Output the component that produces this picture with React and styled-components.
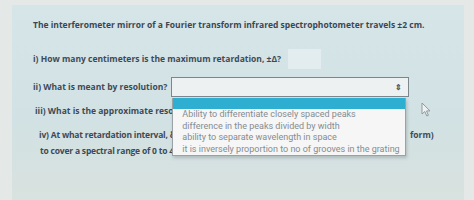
import React from 'react';
import styled, {createGlobalStyle} from 'styled-components';

const Global = createGlobalStyle`
  html, body {
    margin: 0;
    padding: 0;
    background: #e4e8e6;
  }
  body {
    font-family: "Open Sans", "Liberation Sans", sans-serif;
  }
`;

const Page = styled.div`
  width: 474px;
  height: 200px;
  box-sizing: border-box;
  padding: 5px 10px 0 12px;
  overflow: hidden;
  position: relative;
`;

const Panel = styled.div`
  height: 195px;
  box-sizing: border-box;
  background: linear-gradient(180deg, #d6e5e8 0%, #d2e1e3 60%, #d8e2df 100%);
  padding: 14px 30px 0 21px;
`;

const Title = styled.div`
  height: 12px;
  line-height: 12px;
  font-size: 8.5px;
  font-weight: 700;
  color: #3a4753;
  white-space: nowrap;
  margin-bottom: 18px;
`;

const Row = styled.div`
  display: flex;
  align-items: center;
  height: ${p => p.h || 20}px;
  line-height: 12px;
  margin-top: ${p => p.gap || 0}px;
  padding-left: ${p => p.indent || 0}px;
  font-size: 8.5px;
  font-weight: 700;
  letter-spacing: ${p => p.spacing || 0}px;
  color: #3d4a56;
  white-space: nowrap;
  position: relative;
`;

const Clip = styled.span`
  flex: 0 0 ${p => p.w}px;
  overflow: hidden;
`;

const Tail = styled.span`
  letter-spacing: 0;
`;

const Answer = styled.div`
  width: 33px;
  height: 20px;
  margin-left: 7px;
  background: #e3ecee;
`;

const SelectWrap = styled.div`
  position: relative;
  margin-left: 4px;
`;

const SelectBox = styled.div`
  width: 238px;
  height: 20px;
  box-sizing: border-box;
  border: 1px solid #7d868c;
  background: #eef1f1;
  display: flex;
  align-items: center;
  justify-content: flex-end;
  padding-right: 6px;
  color: #4c565e;
  font-size: 8px;
`;

const Menu = styled.div`
  position: absolute;
  top: 21px;
  left: 1px;
  width: 234px;
  box-sizing: border-box;
  border: 1px solid #9aa2a6;
  border-top: none;
  background: #f5f6f5;
  box-shadow: 1px 2px 3px rgba(60, 70, 75, 0.25);
  z-index: 2;
`;

const Highlight = styled.div`
  height: 11px;
  background: #2eafd2;
`;

const Option = styled.div`
  height: 11.5px;
  line-height: 11.5px;
  padding-left: 9px;
  font-family: Roboto, "Open Sans", sans-serif;
  font-size: 9px;
  font-weight: 400;
  letter-spacing: 0;
  color: #858c92;
  white-space: nowrap;
`;

const Cursor = styled.svg`
  position: absolute;
  left: 421px;
  top: 102px;
`;

const options = [
  'Ability to differentiate closely spaced peaks',
  'difference in the peaks divided by width',
  'ability to separate wavelength in space',
  'it is inversely proportion to no of grooves in the grating',
];

export default function App() {
  return (
    <>
      <Global />
      <Page>
        <Panel>
          <Title>
            The interferometer mirror of a Fourier transform infrared spectrophotometer travels ±2 cm.
          </Title>
          <Row indent={-2}>
            i) How many centimeters is the maximum retardation, ±Δ?
            <Answer />
          </Row>
          <Row gap={8} indent={-2}>
            ii) What is meant by resolution?
            <SelectWrap>
              <SelectBox>⇕</SelectBox>
              <Menu>
                <Highlight />
                {options.map(o => (
                  <Option key={o}>{o}</Option>
                ))}
              </Menu>
            </SelectWrap>
          </Row>
          <Row h={16} gap={6} indent={2}>
            iii) What is the approximate resolution of this instrument?
          </Row>
          <Row h={16} gap={8} indent={6} spacing={-0.2}>
            <Clip w={371}>
              iv) At what retardation interval, δ, must the interferogram be digitized (Fourier trans
            </Clip>
            <Tail>form)</Tail>
          </Row>
          <Row h={14} gap={1} indent={7} spacing={-0.2}>
            to cover a spectral range of 0 to 4000 cm⁻¹?
          </Row>
        </Panel>
        <Cursor width="10" height="15" viewBox="0 0 10 15">
          <path d="M1 1 L1 12 L3.8 9.5 L5.8 14 L7.4 13.3 L5.5 8.9 L9 8.9 Z" fill="#eef2f2" stroke="#8a9296" strokeWidth="0.9" strokeLinejoin="round" />
        </Cursor>
      </Page>
    </>
  );
}
